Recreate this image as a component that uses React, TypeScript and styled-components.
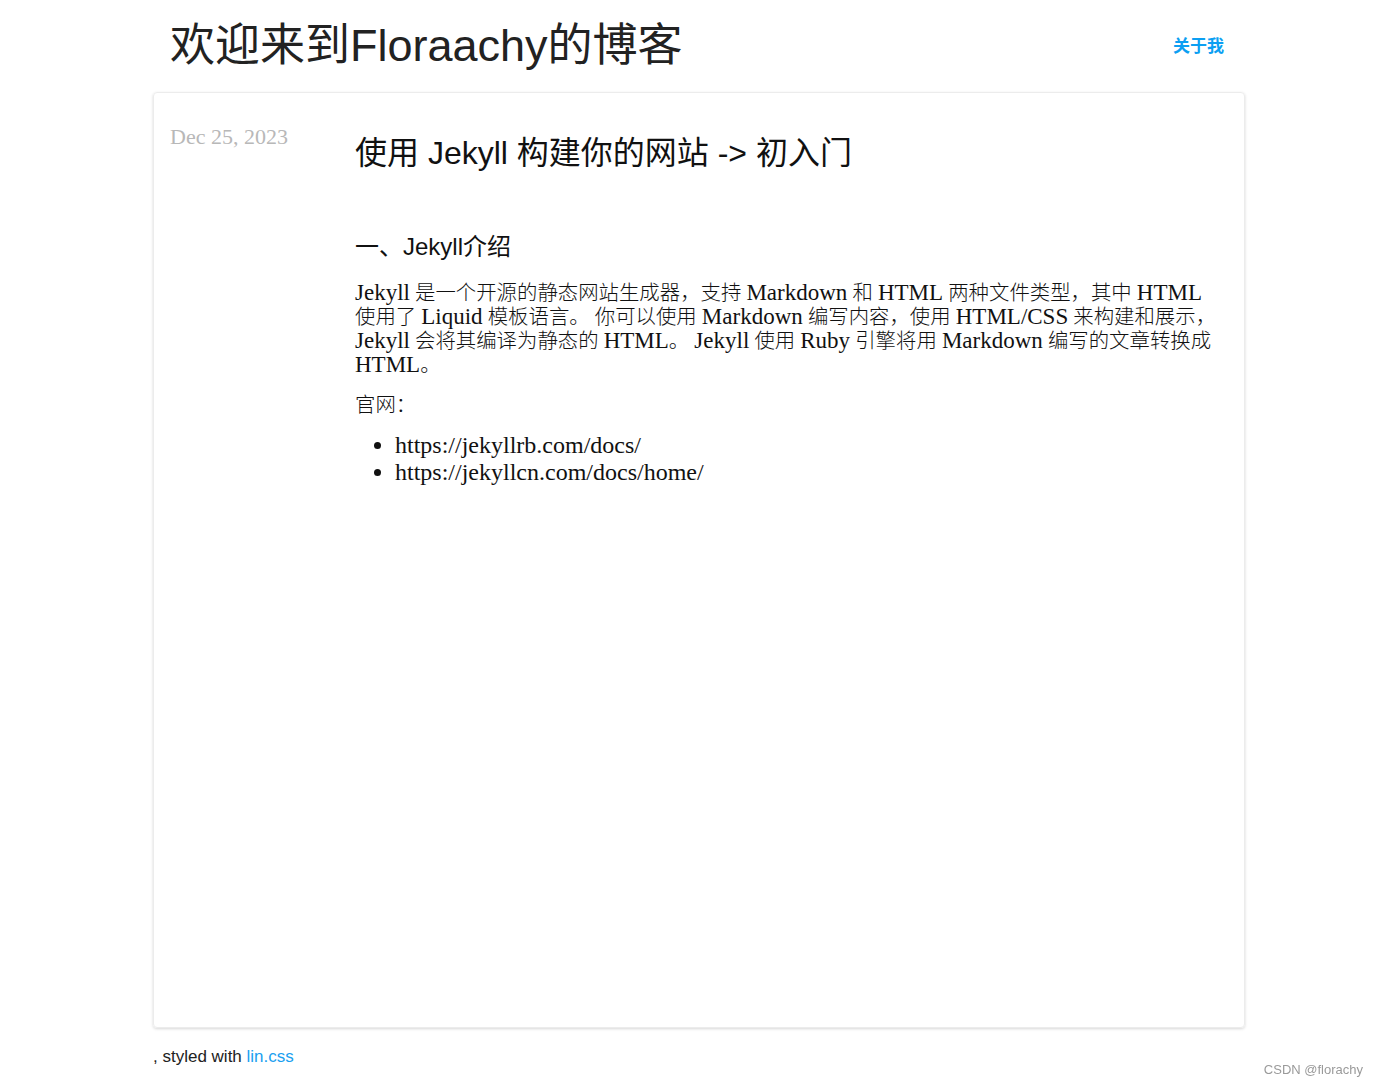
import React from "react";
import styled, { createGlobalStyle } from "styled-components";

const GlobalStyle = createGlobalStyle`
  html, body {
    margin: 0;
    padding: 0;
    background: #ffffff;
  }
  body {
    font-family: "Liberation Sans", "Noto Sans CJK SC", sans-serif;
    color: #222;
  }
`;

const Page = styled.div`
  padding-left: 20px;
  min-height: 1087px;
  box-sizing: border-box;
`;

const Container = styled.div`
  width: 1092px;
  margin: 0 auto;
`;

const Header = styled.header`
  height: 92px;
  display: flex;
  align-items: center;
  justify-content: space-between;
  padding: 0 21px 0 17px;
`;

const SiteTitle = styled.h1`
  margin: 0;
  font-family: "Liberation Sans", "Noto Sans CJK SC", sans-serif;
  font-size: 45px;
  font-weight: 400;
  line-height: 56px;
  color: #222;
`;

const NavLink = styled.a`
  font-family: "Liberation Sans", "Noto Sans CJK SC", sans-serif;
  font-size: 17px;
  font-weight: 700;
  color: #0c9ff2;
  text-decoration: none;
  line-height: 24px;
  margin-top: 2px;
`;

const Card = styled.article`
  height: 936px;
  box-sizing: border-box;
  border: 1px solid #ececec;
  border-radius: 4px;
  box-shadow: 0 1px 3px rgba(0, 0, 0, 0.16);
  padding: 32px 20px 0 16px;
  display: grid;
  grid-template-columns: 185px 1fr;
  align-items: start;
`;

const PostDate = styled.time`
  font-family: "Liberation Serif", serif;
  font-size: 22px;
  line-height: 24px;
  color: #b8b8b8;
`;

const PostBody = styled.div`
  min-width: 0;
`;

const PostTitle = styled.h1`
  margin: 8px 0 0;
  font-family: "Liberation Sans", "Noto Sans CJK SC", sans-serif;
  font-size: 32px;
  font-weight: 400;
  line-height: 40px;
  color: #111;
`;

const SectionTitle = styled.h2`
  margin: 58px 0 0;
  font-family: "Liberation Sans", "Noto Sans CJK SC", sans-serif;
  font-size: 24px;
  font-weight: 400;
  line-height: 32px;
  color: #111;
`;

const Paragraph = styled.p<{ $gap: number }>`
  margin: ${(p) => p.$gap}px 0 0;
  font-family: "Liberation Serif", "Noto Sans CJK SC", serif;
  font-size: 20.4px;
  font-weight: 300;
  line-height: 24px;
  color: #111;
`;

const Latin = styled.span`
  font-size: 23px;
  font-weight: 400;
  line-height: 0;
`;

const LinkList = styled.ul`
  margin: 15px 0 0;
  padding-left: 40px;
  list-style: disc;
`;

const LinkItem = styled.li`
  font-family: "Liberation Serif", serif;
  font-size: 24px;
  line-height: 27px;
  color: #111;
`;

const Footer = styled.footer`
  margin-top: 17px;
  font-family: "Liberation Sans", "Noto Sans CJK SC", sans-serif;
  font-size: 17px;
  line-height: 24px;
  color: #222;
`;

const FooterLink = styled.a`
  color: #1aa0f0;
  text-decoration: none;
`;

const Watermark = styled.div`
  position: fixed;
  right: 15px;
  bottom: 9px;
  font-family: "Liberation Sans", sans-serif;
  font-size: 13px;
  line-height: 16px;
  color: #9a9a9a;
`;

export default function App() {
  return (
    <>
      <GlobalStyle />
      <Page>
        <Container>
          <Header>
            <SiteTitle>欢迎来到Floraachy的博客</SiteTitle>
            <NavLink href="#">关于我</NavLink>
          </Header>
          <Card>
            <PostDate>Dec 25, 2023</PostDate>
            <PostBody>
              <PostTitle>使用 Jekyll 构建你的网站 -&gt; 初入门</PostTitle>
              <SectionTitle>一、Jekyll介绍</SectionTitle>
              <Paragraph $gap={18}>
                <Latin>Jekyll</Latin> 是一个开源的静态网站生成器，支持 <Latin>Markdown</Latin> 和{" "}
                <Latin>HTML</Latin> 两种文件类型，其中 <Latin>HTML</Latin> 使用了 <Latin>Liquid</Latin>{" "}
                模板语言。 你可以使用 <Latin>Markdown</Latin> 编写内容，使用 <Latin>HTML/CSS</Latin>{" "}
                来构建和展示，<Latin>Jekyll</Latin> 会将其编译为静态的 <Latin>HTML</Latin>。{" "}
                <Latin>Jekyll</Latin> 使用 <Latin>Ruby</Latin> 引擎将用 <Latin>Markdown</Latin>{" "}
                编写的文章转换成<Latin>HTML</Latin>。
              </Paragraph>
              <Paragraph $gap={16}>官网：</Paragraph>
              <LinkList>
                <LinkItem>https://jekyllrb.com/docs/</LinkItem>
                <LinkItem>https://jekyllcn.com/docs/home/</LinkItem>
              </LinkList>
            </PostBody>
          </Card>
          <Footer>
            , styled with <FooterLink href="#">lin.css</FooterLink>
          </Footer>
        </Container>
      </Page>
      <Watermark>CSDN @florachy</Watermark>
    </>
  );
}
